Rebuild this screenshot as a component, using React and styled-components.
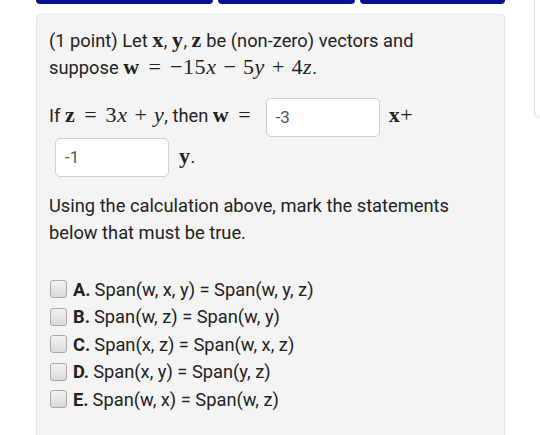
import React from 'react';
import styled, { createGlobalStyle } from 'styled-components';

const Global = createGlobalStyle`
    html, body {
        margin: 0;
        padding: 0;
        background: #fff;
    }
    body {
        font-family: Roboto, "Liberation Sans", sans-serif;
        color: #222;
    }
`;

const Page = styled.div`
    display: flex;
    width: 540px;
    height: 435px;
    overflow: hidden;
`;

const Main = styled.div`
    margin-left: 36px;
    width: 469px;
    flex-shrink: 0;
`;

const Tabs = styled.div`
    display: flex;
    gap: 5px;
`;

const Tab = styled.div`
    width: ${(p) => p.w}px;
    height: 4px;
    background: #0b1290;
    border-radius: 0 0 5px 5px;
`;

const SideCard = styled.div`
    margin-left: 29px;
    width: 40px;
    height: 117px;
    flex-shrink: 0;
    background: #fff;
    border: 1px solid #dcdcdc;
    border-top: none;
    border-radius: 0 0 0 7px;
    box-shadow: 0 1px 3px rgba(0, 0, 0, 0.06);
`;

const Panel = styled.div`
    margin-top: 10px;
    height: 440px;
    box-sizing: border-box;
    padding: 12px 12px;
    background: #f4f4f4;
    border: 1px solid #e6e6e6;
    border-radius: 4px;
    font-size: 18.3px;
    line-height: 27px;
`;

const Para = styled.p`
    margin: ${(p) => p.mt || 0}px 0 0;
`;

const Math = styled.span`
    font-family: "Liberation Serif", "DejaVu Serif", serif;
    font-size: 22px;
    line-height: 1;
    letter-spacing: 0.6px;
    font-style: ${(p) => (p.upright ? 'normal' : 'italic')};
`;

const Vec = styled.span`
    font-family: "Liberation Serif", "DejaVu Serif", serif;
    font-weight: bold;
    font-size: 22px;
    line-height: 1;
    letter-spacing: 0.5px;
`;

const Op = styled.span`
    font-family: "Liberation Serif", "DejaVu Serif", serif;
    font-size: 22px;
    line-height: 1;
    margin: 0 ${(p) => p.space || 7}px;
`;

const AnswerRow = styled.div`
    margin-top: 15px;
    line-height: 39px;
`;

const Answer = styled.span`
    display: inline-block;
    box-sizing: border-box;
    width: 114px;
    height: 39px;
    margin: 0 ${(p) => p.after || 9}px 0 ${(p) => p.before || 6}px;
    padding-left: 9px;
    vertical-align: middle;
    background: #fff;
    border: 1px solid #cfcfcf;
    border-radius: 5px;
    font-size: 17px;
    line-height: 37px;
    color: #555;
`;

const Choices = styled.ul`
    list-style: none;
    margin: 29px 0 0;
    padding: 0;
`;

const Choice = styled.li`
    display: flex;
    align-items: center;
    height: 27.5px;
`;

const Box = styled.span`
    display: inline-block;
    box-sizing: border-box;
    width: 17px;
    height: 18px;
    margin: 0 6px 0 1px;
    border: 1px solid #a8a8a8;
    border-radius: 3px;
    background: linear-gradient(#f2f2f2, #dadada);
`;

const Letter = styled.b`
    margin-right: 4px;
`;

const choices = [
    ['A', 'Span(w, x, y) = Span(w, y, z)'],
    ['B', 'Span(w, z) = Span(w, y)'],
    ['C', 'Span(x, z) = Span(w, x, z)'],
    ['D', 'Span(x, y) = Span(y, z)'],
    ['E', 'Span(w, x) = Span(w, z)'],
];

const App = () => {
    return (
        <Page>
            <Global />
            <Main>
                <Tabs>
                    <Tab w={177} />
                    <Tab w={137} />
                    <Tab w={145} />
                </Tabs>
                <Panel>
                    <Para>
                        (1 point) Let <Vec>x</Vec>, <Vec>y</Vec>, <Vec>z</Vec> be (non-zero) vectors and
                        <br />
                        suppose <Vec>w</Vec><Op space={9}>=</Op><Math upright>−15</Math><Math>x</Math>
                        <Op>−</Op><Math upright>5</Math><Math>y</Math><Op>+</Op><Math upright>4</Math>
                        <Math>z</Math>.
                    </Para>
                    <AnswerRow>
                        If <Vec>z</Vec><Op space={9}>=</Op><Math upright>3</Math><Math>x</Math>
                        <Op>+</Op><Math>y</Math>, then <Vec>w</Vec><Op space={9}>=</Op>
                        <Answer>-3</Answer>
                        <Vec>x</Vec><Math upright>+</Math>
                        <br />
                        <Answer after={10}>-1</Answer>
                        <Vec>y</Vec>.
                    </AnswerRow>
                    <Para mt={15}>
                        Using the calculation above, mark the statements
                        <br />
                        below that must be true.
                    </Para>
                    <Choices>
                        {choices.map(([letter, text]) => (
                            <Choice key={letter}>
                                <Box />
                                <Letter>{letter}.</Letter>
                                {text}
                            </Choice>
                        ))}
                    </Choices>
                </Panel>
            </Main>
            <SideCard />
        </Page>
    );
};

export default App;
